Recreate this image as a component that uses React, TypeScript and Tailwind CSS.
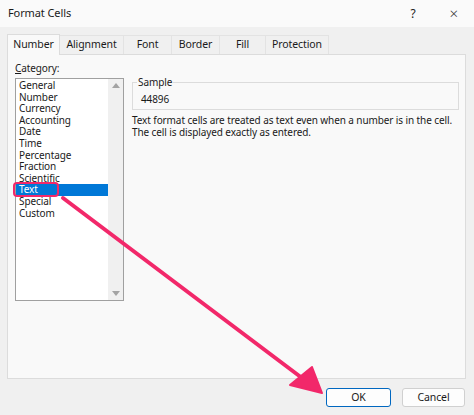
import React from 'react'

const tabs = ['Number', 'Alignment', 'Font', 'Border', 'Fill', 'Protection']
const tabWidths = ['w-[53px]', 'w-[64px]', 'w-[48px]', 'w-[48px]', 'w-[46px]', 'w-[63px]']

const categories = [
    'General',
    'Number',
    'Currency',
    'Accounting',
    'Date',
    'Time',
    'Percentage',
    'Fraction',
    'Scientific',
    'Text',
    'Special',
    'Custom',
]

const App = () => {
    return (
        <div className="relative w-[474px] h-[415px] overflow-hidden bg-[#f0f0f0] text-[#1a1a1a] font-['Noto_Sans','Open_Sans',sans-serif] tracking-[-0.1px]">
            {/* title bar */}
            <div className="h-[27px] bg-[#fafafa] flex items-center pl-[8px] pr-[16px]">
                <span className="text-[11px]">Format Cells</span>
                <span className="ml-auto text-[12px] mr-[34px]">?</span>
                <span className="text-[15px] font-light text-[#333]">×</span>
            </div>

            <div className="px-[7px] pt-[8px]">
                {/* tabs */}
                <div className="flex items-end h-[19px]">
                    {tabs.map((t, i) => (
                        <div
                            key={t}
                            className={
                                i === 0
                                    ? `${tabWidths[i]} h-[21px] -mb-px z-10 bg-[#f9f9f9] border border-b-0 border-[#dcdcdc] flex items-center justify-center text-[10.5px]`
                                    : `${tabWidths[i]} h-[19px] bg-[#f0f0f0] border-t border-r border-[#e3e3e3] flex items-center justify-center text-[10.5px]`
                            }
                        >
                            {t}
                        </div>
                    ))}
                </div>

                {/* panel */}
                <div className="h-[325px] w-[459px] bg-[#f9f9f9] border border-[#dcdcdc] flex pl-[7px] pt-[6px]">
                    <div className="flex flex-col w-[109px]">
                        <span className="text-[10px] leading-[14px]">
                            <span className="underline">C</span>ategory:
                        </span>
                        <div className="mt-[3px] h-[223px] bg-white border border-[#a0a0a0] flex">
                            <ul className="flex-1 pt-[1px] text-[10px] leading-[11.6px]">
                                {categories.map((c) => (
                                    <li
                                        key={c}
                                        className={
                                            c === 'Text'
                                                ? 'pl-[3px] h-[11.6px] bg-[#0078d7] text-white'
                                                : 'pl-[3px] h-[11.6px]'
                                        }
                                    >
                                        {c}
                                    </li>
                                ))}
                            </ul>
                            <div className="w-[15px] bg-[#f0f0f0] flex flex-col justify-between items-center py-[4px]">
                                <svg width="8" height="5" viewBox="0 0 8 5">
                                    <path d="M0 5 L4 0 L8 5 Z" fill="#a3a3a3" />
                                </svg>
                                <svg width="8" height="5" viewBox="0 0 8 5">
                                    <path d="M0 0 L4 5 L8 0 Z" fill="#a3a3a3" />
                                </svg>
                            </div>
                        </div>
                    </div>

                    <div className="ml-[8px] flex flex-col pt-[21px]">
                        <div className="relative w-[327px] h-[28px] border border-[#dcdcdc] pl-[8px] pt-[9px] text-[10px] leading-[14px]">
                            <span className="absolute -top-[8px] left-[4px] px-[1px] bg-[#f9f9f9]">Sample</span>
                            44896
                        </div>
                        <p className="mt-[4px] text-[10px] leading-[12px] whitespace-nowrap">
                            Text format cells are treated as text even when a number is in the cell.
                            <br />
                            The cell is displayed exactly as entered.
                        </p>
                    </div>
                </div>
            </div>

            {/* footer buttons */}
            <div className="flex justify-end gap-[11px] pr-[9px] pt-[9px]">
                <button className="w-[65px] h-[19px] bg-[#fdfdfd] border border-[#0067c0] rounded-[3px] text-[10.5px] leading-none">
                    OK
                </button>
                <button className="w-[63px] h-[19px] bg-[#fdfdfd] border border-[#d0d0d0] rounded-[3px] text-[10.5px] leading-none">
                    Cancel
                </button>
            </div>

            {/* highlight + arrow overlay */}
            <div className="absolute left-[13px] top-[182px] w-[46px] h-[15px] border-[2.5px] border-[#f2286a] rounded-[4px]" />
            <svg className="absolute inset-0 pointer-events-none" width="474" height="415" viewBox="0 0 474 415">
                <line x1="63" y1="198" x2="306" y2="381" stroke="#f2286a" strokeWidth="4" strokeLinecap="round" />
                <path d="M322 393 L290 385 L312 367 Z" fill="#f2286a" stroke="#f2286a" strokeWidth="2" strokeLinejoin="round" />
            </svg>
        </div>
    )
}

export default App
